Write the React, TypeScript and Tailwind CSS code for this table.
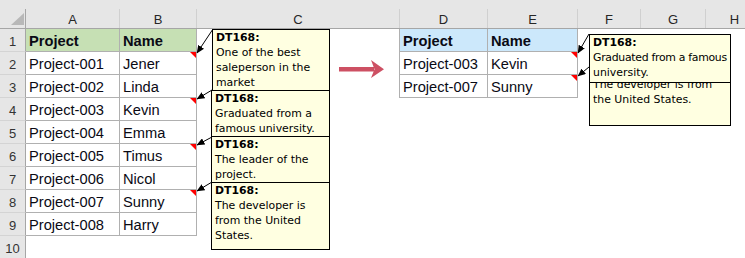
import React from "react";

const rows = [
  ["Project", "Name"],
  ["Project-001", "Jener"],
  ["Project-002", "Linda"],
  ["Project-003", "Kevin"],
  ["Project-004", "Emma"],
  ["Project-005", "Timus"],
  ["Project-006", "Nicol"],
  ["Project-007", "Sunny"],
  ["Project-008", "Harry"],
];

const right = [
  ["Project", "Name"],
  ["Project-003", "Kevin"],
  ["Project-007", "Sunny"],
];

function RedMark() {
  return (
    <span className="absolute top-0 right-0 w-0 h-0 border-l-[6px] border-l-transparent border-t-[6px] border-t-[#ff0000]" />
  );
}

function Comment({
  className,
  lines,
  tight,
}: {
  className: string;
  lines: string[];
  tight?: boolean;
}) {
  return (
    <div
      className={
        "absolute border border-black bg-[#ffffe1] overflow-hidden pl-[3px] text-[10.9px] leading-[15px] text-black whitespace-nowrap " +
        className
      }
      style={{ fontFamily: '"DejaVu Sans", Verdana, sans-serif' }}
    >
      <div className="font-bold">DT168:</div>
      {lines.map((l, i) => (
        <div key={i} className={tight && i === 0 ? "tracking-[-0.3px]" : ""}>
          {l}
        </div>
      ))}
    </div>
  );
}

export default function App() {
  const letters = ["A", "B", "C", "D", "E", "F", "G", "H"];
  const widths = ["w-[94px]", "w-[77px]", "w-[203px]", "w-[88px]", "w-[90px]", "w-[63px]", "w-[65px]", "w-[58px]"];
  return (
    <div
      className="relative w-[745px] h-[258px] overflow-hidden bg-white"
      style={{ fontFamily: '"Liberation Sans", Arial, sans-serif' }}
    >
      {/* top strip */}
      <div className="h-[9px] bg-[#e6e6e6]" />
      {/* column header */}
      <div className="flex h-[20px] bg-[#e6e6e6] border-b border-[#a6a6a6]">
        <div className="relative w-[26px] shrink-0 border-r border-[#a6a6a6]">
          <span className="absolute right-[1px] bottom-[3px] w-0 h-0 border-l-[13px] border-l-transparent border-b-[12px] border-b-[#b8b8b8]" />
        </div>
        {letters.map((l, i) => (
          <div
            key={l}
            className={
              widths[i] +
              " shrink-0 border-r border-[#d0d0d0] flex items-center justify-center text-[13px] text-[#262626] leading-none pt-[1px]"
            }
          >
            {l}
          </div>
        ))}
      </div>
      {/* body rows */}
      {Array.from({ length: 10 }).map((_, r) => {
        const k = r + 1;
        const inLeft = k <= 9;
        const inRight = k <= 3;
        const cellBase =
          "relative shrink-0 flex items-end pl-[3px] pb-[1px] text-[14.67px] leading-[17px] text-[#0a0a14] whitespace-nowrap";
        return (
          <div key={k} className="flex h-[23px]">
            <div className="w-[26px] shrink-0 bg-[#e6e6e6] border-r border-b border-r-[#a6a6a6] border-b-[#d4d4d4] flex items-end justify-center pb-[1px] text-[13px] leading-[16px] text-[#333]">
              {k}
            </div>
            <div
              className={
                cellBase +
                " w-[94px] " +
                (inLeft ? "border-r border-b border-[#b0b0b0] " : "") +
                (k === 1 ? "bg-[#c6e0b4] font-bold" : "")
              }
            >
              {inLeft ? rows[r][0] : ""}
            </div>
            <div
              className={
                cellBase +
                " w-[77px] " +
                (inLeft ? "border-r border-b border-[#b0b0b0] " : "") +
                (k === 1 ? "bg-[#c6e0b4] font-bold" : "")
              }
            >
              {inLeft ? rows[r][1] : ""}
              {[2, 4, 6, 8].includes(k) && <RedMark />}
            </div>
            <div className={cellBase + " w-[203px] " + (inRight ? "border-r border-[#b0b0b0]" : "")} />
            <div
              className={
                cellBase +
                " w-[88px] " +
                (inRight ? "border-r border-b border-[#b0b0b0] " : "") +
                (k === 1 ? "bg-[#cce8fb] font-bold" : "")
              }
            >
              {inRight ? right[r][0] : ""}
            </div>
            <div
              className={
                cellBase +
                " w-[90px] " +
                (inRight ? "border-r border-b border-[#b0b0b0] " : "") +
                (k === 1 ? "bg-[#cce8fb] font-bold" : "")
              }
            >
              {inRight ? right[r][1] : ""}
              {(k === 2 || k === 3) && <RedMark />}
            </div>
          </div>
        );
      })}

      {/* comments left */}
      <Comment className="left-[212px] top-[29px] w-[118px] h-[62px]" lines={["One of the best", "saleperson in the", "market"]} />
      <Comment className="left-[211px] top-[90px] w-[119px] h-[62px]" lines={["Graduated from a", "famous university."]} />
      <Comment className="left-[211px] top-[136px] w-[119px] h-[62px]" lines={["The leader of the", "project."]} />
      <Comment className="left-[211px] top-[182px] w-[119px] h-[68px]" lines={["The developer is", "from the United", "States."]} />

      {/* comments right */}
      <Comment className="left-[589px] top-[61px] w-[142px] h-[65px]" lines={["The developer is from", "the United States."]} />
      <Comment className="left-[589px] top-[34px] w-[142px] h-[49px]" lines={["Graduated from a famous", "university."]} tight />

      {/* overlay drawings */}
      <svg className="absolute inset-0 pointer-events-none" width="745" height="258" viewBox="0 0 745 258">
        <defs>
          <marker id="ah" markerWidth="8" markerHeight="7" refX="7.5" refY="3.5" orient="auto" markerUnits="userSpaceOnUse">
            <path d="M0,0 L8,3.5 L0,7 z" fill="#000" />
          </marker>
        </defs>
        {[
          [213, 29, 197, 53],
          [212, 90, 197, 99],
          [212, 137, 197, 145],
          [212, 182, 197, 191],
          [589, 34, 578, 53],
          [589, 67, 578, 76],
        ].map(([x1, y1, x2, y2], i) => (
          <line key={i} x1={x1} y1={y1} x2={x2} y2={y2} stroke="#000" strokeWidth="1" markerEnd="url(#ah)" />
        ))}
        {/* big red arrow */}
        <rect x="339" y="67" width="35" height="4.5" fill="#cd5063" />
        <polygon points="371,60 384,69.3 371,78 374.5,69.3" fill="#cd5063" />
      </svg>
    </div>
  );
}
